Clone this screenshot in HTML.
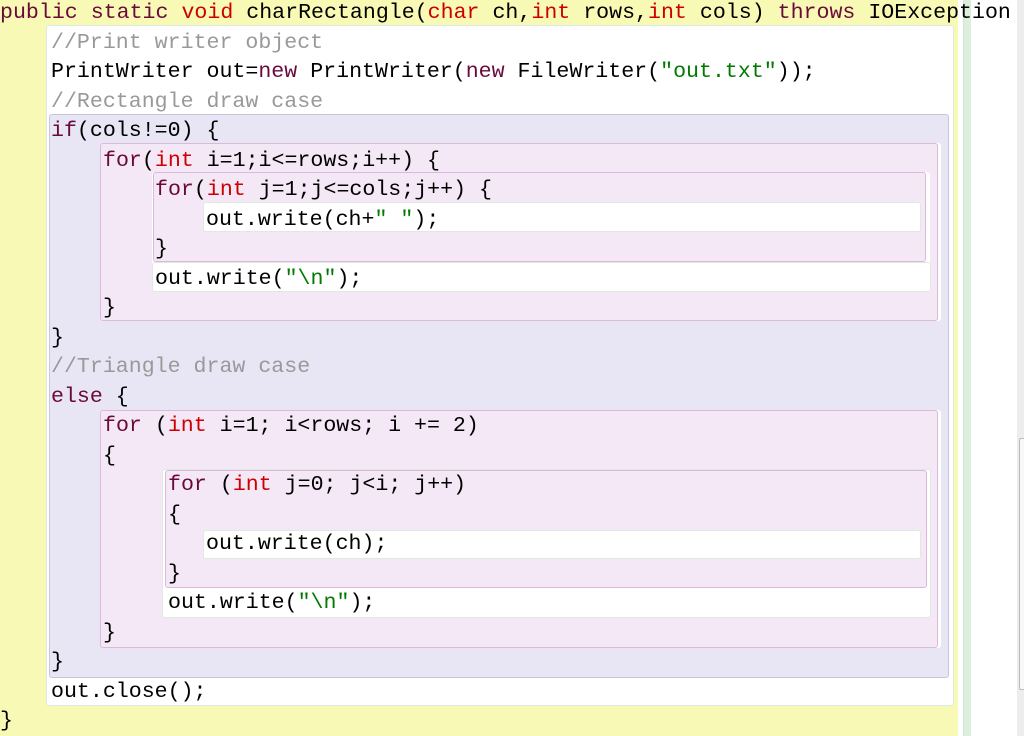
<!DOCTYPE html>
<html><head><meta charset="utf-8"><style>
body{margin:0;width:1024px;height:736px;overflow:hidden;background:#fff;position:relative;font-family:"Liberation Mono","DejaVu Sans Mono",monospace;font-size:21.6px}
.b{position:absolute;box-sizing:border-box;border-radius:3px}
.y{background:#f9f9b6}
.w{background:#fff;border:1px solid #dfeadf}
.p{background:#e8e6f5;border:1px solid #c9c5df}
.k{background:#f5e8f6;border:1px solid #dcb9dc}
.l{position:absolute;white-space:pre;line-height:30px;color:#000;margin-top:2px}
.kw{color:#6a0a3a}.t{color:#cc0000}.s{color:#007a00}.c{color:#999}
</style></head><body>
<div class="b y" style="left:0;top:0;width:958px;height:736px;border-radius:0"></div>
<div style="position:absolute;left:963px;top:0;width:7px;height:736px;background:#dcefdc;border-left:1px solid #cfe5cf"></div>
<div style="position:absolute;left:1017px;top:0;width:7px;height:736px;background:#ededed"></div>
<div style="position:absolute;left:1019px;top:438px;width:5px;height:250px;background:#f8f8f8;border:1px solid #bbb;border-radius:2px"></div>

<div class="b w" style="left:46px;top:25px;width:908px;height:681px"></div>
<div class="b p" style="left:49px;top:114px;width:900px;height:564px"></div>
<div class="b w" style="left:100px;top:143px;width:841px;height:178px;border:none"></div>
<div class="b k" style="left:100px;top:143px;width:838px;height:178px"></div>
<div class="b w" style="left:152px;top:172px;width:778px;height:119px;border:none"></div>
<div class="b k" style="left:153px;top:172px;width:773px;height:90px"></div>
<div class="b w" style="left:203px;top:202px;width:718px;height:30px"></div>
<div class="b w" style="left:152px;top:262px;width:779px;height:30px"></div>

<div class="b w" style="left:100px;top:410px;width:841px;height:238px;border:none"></div>
<div class="b k" style="left:100px;top:410px;width:838px;height:238px"></div>
<div class="b w" style="left:162px;top:469px;width:769px;height:149px"></div>
<div class="b k" style="left:165px;top:470px;width:762px;height:118px"></div>
<div class="b w" style="left:203px;top:530px;width:718px;height:29px"></div>

<div class="l" style="left:0;top:-4px"><span class="kw">public static</span> <span class="t">void</span> charRectangle(<span class="t">char</span> ch,<span class="t">int</span> rows,<span class="t">int</span> cols) <span class="kw">throws</span> IOException</div>
<div class="l c" style="left:51px;top:25.5px">//Print writer object</div>
<div class="l" style="left:51px;top:55px">PrintWriter out=<span class="kw">new</span> PrintWriter(<span class="kw">new</span> FileWriter(<span class="s">"out.txt"</span>));</div>
<div class="l c" style="left:51px;top:84.5px">//Rectangle draw case</div>
<div class="l" style="left:51px;top:114px"><span class="kw">if</span>(cols!=0) {</div>
<div class="l" style="left:103px;top:143.5px"><span class="kw">for</span>(<span class="t">int</span> i=1;i&lt;=rows;i++) {</div>
<div class="l" style="left:155px;top:173px"><span class="kw">for</span>(<span class="t">int</span> j=1;j&lt;=cols;j++) {</div>
<div class="l" style="left:206px;top:202.5px">out.write(ch+<span class="s">" "</span>);</div>
<div class="l" style="left:155px;top:232px">}</div>
<div class="l" style="left:155px;top:261.5px">out.write(<span class="s">"\n"</span>);</div>
<div class="l" style="left:103px;top:291px">}</div>
<div class="l" style="left:51px;top:320.5px">}</div>
<div class="l c" style="left:51px;top:350px">//Triangle draw case</div>
<div class="l" style="left:51px;top:379.5px"><span class="kw">else</span> {</div>
<div class="l" style="left:103px;top:409px"><span class="kw">for</span> (<span class="t">int</span> i=1; i&lt;rows; i += 2)</div>
<div class="l" style="left:103px;top:438.5px">{</div>
<div class="l" style="left:168px;top:468px"><span class="kw">for</span> (<span class="t">int</span> j=0; j&lt;i; j++)</div>
<div class="l" style="left:168px;top:497.5px">{</div>
<div class="l" style="left:206px;top:527px">out.write(ch);</div>
<div class="l" style="left:168px;top:556.5px">}</div>
<div class="l" style="left:168px;top:586px">out.write(<span class="s">"\n"</span>);</div>
<div class="l" style="left:103px;top:615.5px">}</div>
<div class="l" style="left:51px;top:645px">}</div>
<div class="l" style="left:51px;top:674.5px">out.close();</div>
<div class="l" style="left:0;top:704px">}</div>
</body></html>
